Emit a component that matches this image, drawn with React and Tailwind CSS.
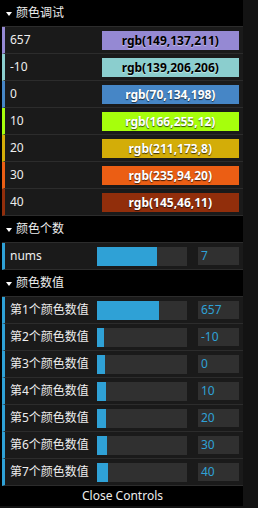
import React from "react";

const colors = [
  { v: 657, rgb: [149, 137, 211], dark: true },
  { v: -10, rgb: [139, 206, 206], dark: true },
  { v: 0, rgb: [70, 134, 198] },
  { v: 10, rgb: [166, 255, 12] },
  { v: 20, rgb: [211, 173, 8] },
  { v: 30, rgb: [235, 94, 20] },
  { v: 40, rgb: [145, 46, 11] },
];

const font = { fontFamily: '"Noto Sans", "Noto Sans CJK SC", sans-serif' };

function Title({ text }) {
  return (
    <div className="relative h-[27px] border-b border-[#2c2c2c] bg-black pl-[14px] text-[12px] leading-[26px] text-[#eee]">
      <span className="absolute left-[4px] top-[12px] h-0 w-0 border-x-[3px] border-t-[4px] border-x-transparent border-t-white" />
      {text}
    </div>
  );
}

function Row({ color, label, children }) {
  return (
    <div
      className="flex h-[27px] border-b border-l-[3px] border-b-[#2c2c2c] bg-[#1a1a1a] pl-[5px] pr-[4px]"
      style={{ borderLeftColor: color }}
    >
      <div className="w-[40%] shrink-0 truncate text-[12px] leading-[26px] text-[#eee]">{label}</div>
      <div className="flex flex-1 items-start pt-[4px]">{children}</div>
    </div>
  );
}

function NumberRow({ label, value, min, max }) {
  const pct = ((value - min) / (max - min)) * 100;
  return (
    <Row color="#2fa1d6" label={label}>
      <div className="ml-[-5px] h-[19px] w-[66%] bg-[#303030]">
        <div className="h-full bg-[#2fa1d6]" style={{ width: pct + "%" }} />
      </div>
      <div className="ml-auto h-[18px] w-[41px] bg-[#303030] pl-[3px] text-[12px] leading-[18px] text-[#2fa1d6]">
        {value}
      </div>
    </Row>
  );
}

export default function App() {
  return (
    <div className="flex h-[508px] w-[258px] items-start bg-[#131313]" style={font}>
      <div className="w-[243px] bg-black pl-[2px]">
        <Title text="颜色调试" />
        {colors.map((c) => {
          const str = `rgb(${c.rgb.join(",")})`;
          return (
            <Row key={c.v} color={str} label={c.v}>
              <div
                className={
                  "flex h-[19px] flex-1 items-center justify-center text-[12px] font-bold " +
                  (c.dark
                    ? "text-black [text-shadow:0_1px_1px_rgba(255,255,255,0.5)]"
                    : "text-white [text-shadow:0_1px_1px_rgba(0,0,0,0.7)]")
                }
                style={{ backgroundColor: str }}
              >
                {str}
              </div>
            </Row>
          );
        })}
        <Title text="颜色个数" />
        <NumberRow label="nums" value={7} min={1} max={10} />
        <Title text="颜色数值" />
        {colors.map((c, i) => (
          <NumberRow key={i} label={`第${i + 1}个颜色数值`} value={c.v} min={-100} max={1000} />
        ))}
        <div className="h-[20px] text-center text-[12px] leading-[20px] text-[#eee]">Close Controls</div>
      </div>
      <div className="flex-1" />
    </div>
  );
}
